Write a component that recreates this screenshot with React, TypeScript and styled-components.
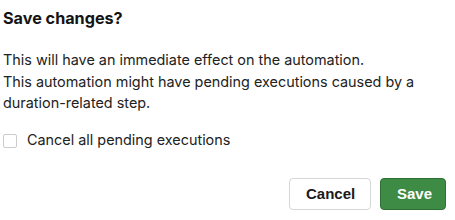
import React, { useState } from 'react';
import styled, { createGlobalStyle } from 'styled-components';

const GlobalStyle = createGlobalStyle`
  html, body {
    margin: 0;
    padding: 0;
    background: #ffffff;
  }
  body {
    font-family: Inter, "Liberation Sans", sans-serif;
    color: #1a1a1a;
  }
`;

const Dialog = styled.div`
  width: 455px;
  height: 220px;
  box-sizing: border-box;
  padding: 8px 9px 0 3px;
  display: flex;
  flex-direction: column;
`;

const Title = styled.h2`
  margin: 0;
  font-size: 16.2px;
  line-height: 20px;
  font-weight: 700;
  color: #141414;
`;

const Body = styled.p`
  margin: 21px 0 0;
  font-size: 14.4px;
  line-height: 21.5px;
  color: #222222;
`;

const CheckRow = styled.label`
  margin-top: 15px;
  height: 22px;
  display: flex;
  align-items: center;
  gap: 10px;
  font-size: 14.4px;
  color: #222222;
  cursor: pointer;
`;

const Box = styled.span<{ $checked: boolean }>`
  width: 14px;
  height: 14px;
  box-sizing: border-box;
  border: 1.5px solid #cccccc;
  border-radius: 2px;
  background: ${(p) => (p.$checked ? '#3d8b45' : '#fff')};
  margin-top: 2px;
  flex-shrink: 0;
`;

const Actions = styled.div`
  margin-top: 27px;
  display: flex;
  justify-content: flex-end;
  gap: 9px;
`;

const Button = styled.button<{ $primary?: boolean }>`
  height: 32px;
  box-sizing: border-box;
  padding: 0 16px;
  border-radius: 4px;
  font-family: "Liberation Sans", Arial, sans-serif;
  font-size: 15px;
  font-weight: 700;
  cursor: pointer;
  border: 1px solid ${(p) => (p.$primary ? '#2f7037' : '#d6d6d6')};
  background: ${(p) => (p.$primary ? '#3d8b45' : '#ffffff')};
  color: ${(p) => (p.$primary ? '#ffffff' : '#1a1a1a')};
`;

export default function App() {
  const [checked, setChecked] = useState(false);
  return (
    <>
      <GlobalStyle />
      <Dialog>
        <Title>Save changes?</Title>
        <Body>
          This will have an immediate effect on the automation.
          <br />
          This automation might have pending executions caused by a
          <br />
          duration-related step.
        </Body>
        <CheckRow onClick={() => setChecked(!checked)}>
          <Box $checked={checked} />
          Cancel all pending executions
        </CheckRow>
        <Actions>
          <Button style={{ width: 82 }}>Cancel</Button>
          <Button $primary style={{ width: 66 }}>Save</Button>
        </Actions>
      </Dialog>
    </>
  );
}
